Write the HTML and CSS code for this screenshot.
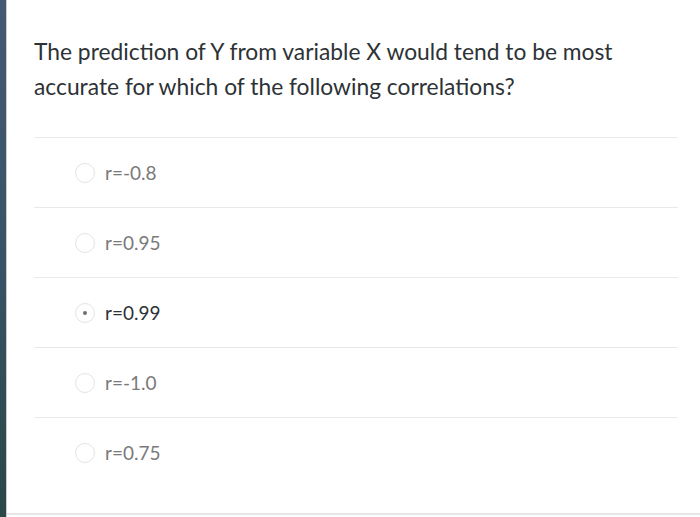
FILE: index.html
```html
<!DOCTYPE html>
<html>
<head>
<meta charset="utf-8">
<link rel="stylesheet" href="styles.css">
</head>
<body>
<div class="page">
  <div class="sidebar"></div>
  <div class="main">
    <div class="question">
      <p class="question-text">The prediction of Y from variable X would tend to be most accurate for which of the following correlations?</p>
      <div class="options">
        <div class="option"><span class="radio"></span><span class="label">r=-0.8</span></div>
        <div class="option"><span class="radio"></span><span class="label">r=0.95</span></div>
        <div class="option selected"><span class="radio"></span><span class="label">r=0.99</span></div>
        <div class="option"><span class="radio"></span><span class="label">r=-1.0</span></div>
        <div class="option"><span class="radio"></span><span class="label">r=0.75</span></div>
      </div>
    </div>
  </div>
</div>
</body>
</html>
```

FILE: styles.css
```css
html, body {
  margin: 0;
  padding: 0;
  background: #ffffff;
}
.page {
  display: flex;
  width: 700px;
  height: 517px;
  overflow: hidden;
}
.sidebar {
  width: 6px;
  flex: none;
  background: linear-gradient(to bottom, #445a73 0%, #3a5266 50%, #2c4747 100%);
  border-right: 1px solid #c9cccc;
}
.main {
  flex: 1;
  height: 513px;
  border-bottom: 2px solid #e6e6e6;
}
.question {
  padding: 34px 22px 0 27px;
}
.question-text {
  margin: 0 0 33px 0;
  font-family: Lato, "Liberation Sans", sans-serif;
  font-size: 22.8px;
  line-height: 35px;
  color: #2d3236;
}
.option {
  display: flex;
  align-items: center;
  height: 69px;
  border-top: 1px solid #e9e9e9;
  padding-left: 41px;
}
.radio {
  width: 20px;
  height: 20px;
  border: 1px solid #e3e3e3;
  border-radius: 50%;
  display: flex;
  align-items: center;
  justify-content: center;
  box-sizing: border-box;
  margin-right: 10px;
  margin-top: 1px;
}
.selected .radio::after {
  content: "";
  width: 4px;
  height: 4px;
  border-radius: 50%;
  background: #6f6f6f;
}
.label {
  font-family: Lato, "Liberation Sans", sans-serif;
  font-size: 19px;
  color: #7a7a7a;
}
.selected .label {
  color: #2d3236;
}
```
